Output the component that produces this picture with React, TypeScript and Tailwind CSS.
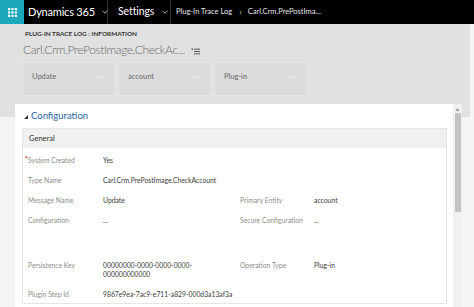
import React from 'react';

const Chevron: React.FC = () => (
  <svg width="6" height="4" viewBox="0 0 6 4" className="text-[#bbb] shrink-0">
    <path d="M0.5 0.8 L3 3.2 L5.5 0.8" fill="none" stroke="currentColor" strokeWidth="0.9" />
  </svg>
);

const tiles = ['Update', 'account', 'Plug-in'];

interface Field {
  label: string;
  value: React.ReactNode;
  required?: boolean;
}

const rows: { left: Field; right?: Field; h: string }[] = [
  { left: { label: 'System Created', value: 'Yes', required: true }, h: 'h-[20px]' },
  { left: { label: 'Type Name', value: 'Carl.Crm.PrePostImage.CheckAccount' }, h: 'h-[20px]' },
  {
    left: { label: 'Message Name', value: 'Update' },
    right: { label: 'Primary Entity', value: 'account' },
    h: 'h-[20px]',
  },
  {
    left: { label: 'Configuration', value: '...' },
    right: { label: 'Secure Configuration', value: '...' },
    h: 'h-[45px]',
  },
  {
    left: {
      label: 'Persistence Key',
      value: (
        <>
          00000000-0000-0000-0000-
          <br />
          000000000000
        </>
      ),
    },
    right: { label: 'Operation Type', value: 'Plug-in' },
    h: 'h-[29px]',
  },
  { left: { label: 'Plugin Step Id', value: '9867e9ea-7ac9-e711-a829-000d3a13af3a' }, h: 'h-[24px]' },
];

const FieldCells: React.FC<{ field?: Field; labelW: string; valueW: string }> = ({ field, labelW, valueW }) => (
  <>
    <div className={`${labelW} relative text-[#8e8e8e]`}>
      {field?.required && <span className="absolute -left-[3px] -top-[1px] text-[#c00]">*</span>}
      {field?.label}
    </div>
    <div className={`${valueW} text-[#3c3c3c] leading-[9px] pt-[1px]`}>{field?.value}</div>
  </>
);

export default function App() {
  return (
    <div
      className="w-[474px] h-[307px] overflow-hidden bg-[#f4f4f4]"
      style={{ fontFamily: 'Lato, "Open Sans", sans-serif' }}
    >
      {/* top nav */}
      <div className="h-[24px] bg-black flex items-stretch text-white whitespace-nowrap">
        <div className="w-[24px] bg-[#1ba8bb] flex items-center justify-center">
          <svg width="9" height="9" viewBox="0 0 9 9">
            <g fill="#fff">
              <rect x="0" y="0" width="2.2" height="2.2" />
              <rect x="3.4" y="0" width="2.2" height="2.2" />
              <rect x="6.8" y="0" width="2.2" height="2.2" />
              <rect x="0" y="3.4" width="2.2" height="2.2" />
              <rect x="3.4" y="3.4" width="2.2" height="2.2" />
              <rect x="6.8" y="3.4" width="2.2" height="2.2" />
              <rect x="0" y="6.8" width="2.2" height="2.2" />
              <rect x="3.4" y="6.8" width="2.2" height="2.2" />
              <rect x="6.8" y="6.8" width="2.2" height="2.2" />
            </g>
          </svg>
        </div>
        <div className="w-[84px] pl-[4px] flex items-center gap-[7px] border-r border-[#333]">
          <span className="text-[11px] tracking-[-0.2px]">Dynamics 365</span>
          <Chevron />
        </div>
        <div className="w-[63px] pl-[10px] flex items-center gap-[8px] border-r border-[#333]">
          <span className="text-[10.5px] tracking-[-0.1px]">Settings</span>
          <Chevron />
        </div>
        <div className="flex items-center pl-[5px] text-[7.5px] text-[#e6e6e6]">
          <span>Plug-In Trace Log</span>
          <span className="ml-[7px] text-[9px] text-[#ccc]">›</span>
          <span className="ml-[6px]">Carl.Crm.PrePostIma...</span>
        </div>
      </div>

      {/* header */}
      <div className="h-[93px] bg-[#e1e1e1] mr-[4px] pt-[6px] pl-[25px]">
        <div className="text-[6.4px] font-bold text-[#333] leading-[8px]">
          PLUG-IN TRACE LOG : INFORMATION
        </div>
        <div className="flex items-center mt-[3px] -ml-[2px] h-[18px]">
          <span className="text-[12px] font-light text-[#6a6a6a] tracking-[-0.4px]">
            Carl.Crm.PrePostImage.CheckAc...
          </span>
          <svg width="9" height="7" viewBox="0 0 9 7" className="ml-[6px] mt-[2px]">
            <path d="M0.5 1 L2 1 M1.25 0.3 L1.25 2.3" stroke="#555" strokeWidth="0.8" />
            <path d="M3 1.2 H9 M3 3.5 H9 M3 5.8 H9" stroke="#555" strokeWidth="1" />
          </svg>
        </div>
        <div className="flex gap-[2px] mt-[3px] -ml-[3px]">
          {tiles.map((t) => (
            <div
              key={t}
              className="w-[94px] h-[34px] bg-[#dcdcdc] border border-[#e6e6e6] pl-[9px] pt-[8px] flex justify-between pr-[10px]"
            >
              <span className="text-[7.5px] text-[#666]">{t}</span>
              <span className="w-[9px] h-[3px] mt-[5px] bg-[#e2e2e2]" />
            </div>
          ))}
        </div>
      </div>

      {/* form panel */}
      <div className="-mt-[13px] ml-[15px] w-[447px] h-[203px] flex bg-white">
        <div className="flex-1 pl-[7px] pr-[6px]">
          <div className="flex items-center h-[24px] pl-[2px]">
            <svg width="4" height="4" viewBox="0 0 4 4" className="mt-[2px]">
              <path d="M4 0 L4 4 L0 4 Z" fill="#333" />
            </svg>
            <span className="ml-[3px] text-[9.5px] text-[#2e62a8]">Configuration</span>
          </div>
          <div className="border border-[#e6e6e6] h-[176px]">
            <div className="h-[19px] bg-[#f0f0f0] flex items-center pl-[6px] text-[7.5px] text-[#333]">
              General
            </div>
            <div className="pt-[2px] pl-[5px] text-[6.8px] leading-[10px] whitespace-nowrap">
              {rows.map((r, i) => (
                <div key={i} className={`flex items-start pt-[5px] ${r.h}`}>
                  <FieldCells field={r.left} labelW="w-[75px]" valueW={r.right ? 'w-[137px]' : 'flex-1'} />
                  {r.right && <FieldCells field={r.right} labelW="w-[74px]" valueW="flex-1" />}
                </div>
              ))}
            </div>
          </div>
        </div>
        {/* scrollbar */}
        <div className="w-[9px] bg-[#f0f0f0] flex flex-col items-center">
          <svg width="5" height="5" viewBox="0 0 5 5" className="mt-[3px]">
            <path d="M2.5 1 L4.5 4 L0.5 4 Z" fill="#999" />
          </svg>
          <div className="w-[6px] h-[99px] mt-[1px] bg-[#c3c3c3]" />
        </div>
      </div>
    </div>
  );
}
